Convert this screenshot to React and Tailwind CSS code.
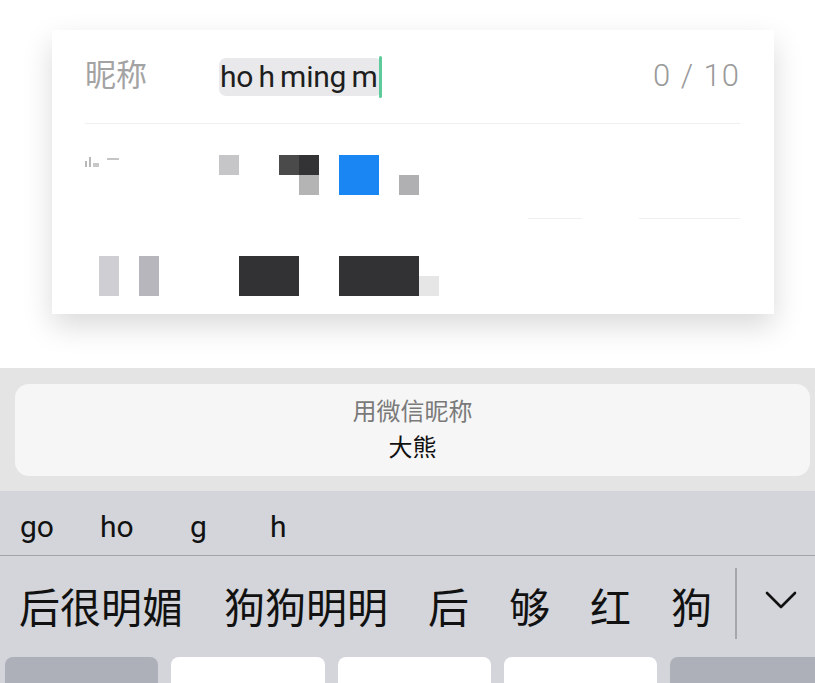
import React from "react";

const row2 = [
  ["bg-[#c6c6c9]", ""],
  ["", ""],
  ["", ""],
  ["bg-[#4a4a4b]", ""],
  ["bg-[#333335]", "bg-[#b4b4b5]"],
  ["", ""],
  ["bg-[#1a86f4]", "bg-[#1a86f4]"],
  ["bg-[#1a86f4]", "bg-[#1a86f4]"],
  ["", ""],
  ["", "bg-[#b0b0b3]"],
];

const row3 = [
  ["bg-[#cfcfd3]", "bg-[#cfcfd3]"],
  ["", ""],
  ["bg-[#b6b6bc]", "bg-[#b6b6bc]"],
  ["", ""],
  ["", ""],
  ["", ""],
  ["", ""],
  ["bg-[#323234]", "bg-[#323234]"],
  ["bg-[#323234]", "bg-[#323234]"],
  ["bg-[#323234]", "bg-[#323234]"],
  ["", ""],
  ["", ""],
  ["bg-[#323234]", "bg-[#323234]"],
  ["bg-[#323234]", "bg-[#323234]"],
  ["bg-[#323234]", "bg-[#323234]"],
  ["bg-[#323234]", "bg-[#323234]"],
  ["", "bg-[#e6e6e7]"],
];

function Mosaic({ cols }) {
  return (
    <div className="flex">
      {cols.map((c, i) => (
        <div key={i} className="flex w-[20px] flex-col">
          <div className={"h-[20px] w-[20px] " + c[0]} />
          <div className={"h-[20px] w-[20px] " + c[1]} />
        </div>
      ))}
    </div>
  );
}

export default function App() {
  return (
    <div
      className="flex h-[683px] w-[815px] flex-col overflow-hidden bg-white"
      style={{ fontFamily: "Roboto, 'Noto Sans CJK SC', sans-serif" }}
    >
      {/* top white area with card */}
      <div className="h-[368px] shrink-0 bg-white pl-[52px] pt-[30px]">
        <div className="flex h-[284px] w-[722px] flex-col bg-white pl-[33px] pr-[34px] shadow-[0_12px_28px_rgba(0,0,0,0.15)]">
          {/* row 1 */}
          <div className="flex h-[93px] shrink-0 items-center">
            <div className="w-[134px] text-[31px] text-[#a3a3a3]">昵称</div>
            <div className="flex flex-1 items-center">
              <div className="flex h-[38px] items-center rounded-[7px] bg-[#e9e9eb] pl-[1px]">
                <span className="text-[30px] leading-none tracking-[-0.2px] text-[#1e1e1e] [word-spacing:-2px]">
                  ho h ming m
                </span>
                <span className="ml-[1px] h-[42px] w-[3px] rounded-full bg-[#5dcb9b]" />
              </div>
            </div>
            <div className="text-[31px] font-light tracking-[1px] text-[#9a9a9a] [word-spacing:1px]">0 / 10</div>
          </div>
          <div className="h-px shrink-0 bg-[#efefef]" />
          {/* row 2 */}
          <div className="flex h-[94px] shrink-0 pt-[31px]">
            <div className="flex w-[134px] items-start gap-[8px] pt-[2px]">
              <div className="flex items-end gap-[2px]">
                <div className="h-[6px] w-[2px] bg-[#b8b8b8]" />
                <div className="h-[10px] w-[2px] bg-[#b8b8b8]" />
                <div className="h-[4px] w-[6px] bg-[#c8c8c8]" />
              </div>
              <div className="mt-[1px] h-[2px] w-[12px] bg-[#c5c5c5]" />
            </div>
            <Mosaic cols={row2} />
          </div>
          <div className="flex h-px shrink-0">
            <div className="ml-[443px] w-[55px] bg-[#f0f0f0]" />
            <div className="ml-[57px] w-[103px] bg-[#f0f0f0]" />
          </div>
          {/* row 3 */}
          <div className="flex h-[95px] shrink-0 pl-[14px] pt-[37px]">
            <Mosaic cols={row3} />
          </div>
        </div>
      </div>

      {/* suggestion bar */}
      <div className="h-[123px] shrink-0 bg-[#e4e4e5] pl-[15px] pr-[5px] pt-[16px]">
        <div className="flex h-[92px] flex-col items-center justify-center rounded-[14px] bg-[#f6f6f6]">
          <div className="text-[24px] leading-[30px] text-[#7a7a7a]">用微信昵称</div>
          <div className="mt-[6px] text-[24px] leading-[30px] text-[#111]">大熊</div>
        </div>
      </div>

      {/* keyboard */}
      <div className="flex flex-1 flex-col bg-[#d3d5da]">
        <div className="flex h-[64px] shrink-0 items-center pl-[20px] pt-[6px] text-[30px] text-[#111]">
          <span className="w-[80px]">go</span>
          <span className="w-[90px]">ho</span>
          <span className="w-[80px]">g</span>
          <span>h</span>
        </div>
        <div className="h-px shrink-0 bg-[#a3a4a8]" />
        <div className="flex h-[101px] shrink-0 items-center">
          <div className="flex flex-1 items-center gap-[40px] pl-[19px] pt-[6px] text-[41px] text-[#111]">
            <span>后很明媚</span>
            <span className="ml-[1px]">狗狗明明</span>
            <span>后</span>
            <span>够</span>
            <span>红</span>
            <span>狗</span>
          </div>
          <div className="mt-[-6px] h-[71px] w-[2px] shrink-0 bg-[#a6a7ab]" />
          <div className="flex w-[78px] shrink-0 justify-center pb-[12px] pl-[10px]">
            <svg width="32" height="19" viewBox="0 0 32 19" fill="none">
              <path d="M2 2 L16 16 L30 2" stroke="#111" strokeWidth="2.6" strokeLinecap="round" strokeLinejoin="round" />
            </svg>
          </div>
        </div>
        <div className="flex gap-[13px] pl-[5px]">
          <div className="h-[40px] w-[153px] shrink-0 rounded-t-[8px] bg-[#adb0b8]" />
          <div className="h-[40px] w-[154px] shrink-0 rounded-t-[8px] bg-white" />
          <div className="h-[40px] w-[153px] shrink-0 rounded-t-[8px] bg-white" />
          <div className="h-[40px] w-[153px] shrink-0 rounded-t-[8px] bg-white" />
          <div className="h-[40px] w-[153px] shrink-0 rounded-t-[8px] bg-[#adb0b8]" />
        </div>
      </div>
    </div>
  );
}
